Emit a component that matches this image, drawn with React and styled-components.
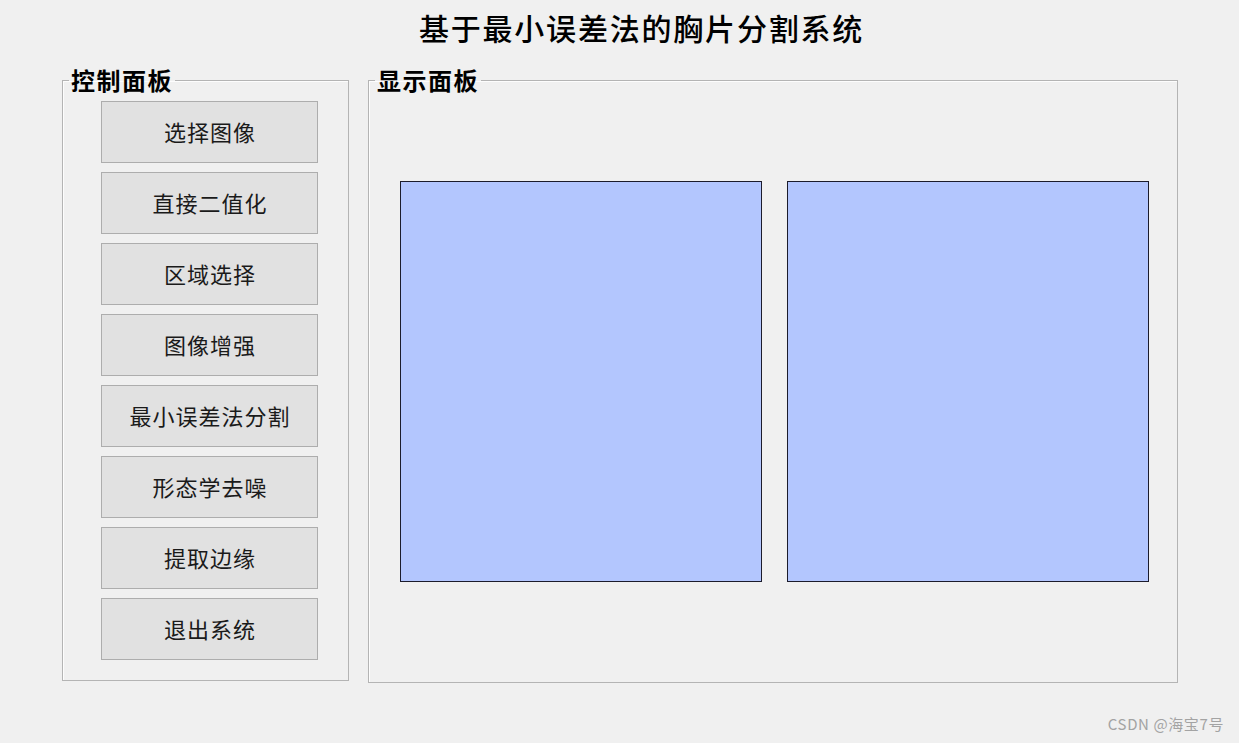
import React from 'react'
import styled, { createGlobalStyle } from 'styled-components'

const GlobalStyle = createGlobalStyle`
  html, body {
    margin: 0;
    padding: 0;
    background: #f0f0f0;
  }
  body {
    font-family: "Noto Sans CJK SC", "Noto Sans", sans-serif;
    color: #000;
  }
`;

const buttons = [
  '选择图像',
  '直接二值化',
  '区域选择',
  '图像增强',
  '最小误差法分割',
  '形态学去噪',
  '提取边缘',
  '退出系统',
];

function App() {
  return (
    <Page>
      <GlobalStyle />
      <Title>基于最小误差法的胸片分割系统</Title>
      <Main>
        <ControlPanel>
          <Legend>控制面板</Legend>
          <ButtonList>
            {buttons.map((label) => (
              <PushButton key={label}>{label}</PushButton>
            ))}
          </ButtonList>
        </ControlPanel>
        <DisplayPanel>
          <Legend>显示面板</Legend>
          <Axes>
            <ImageBox />
            <ImageBox />
          </Axes>
        </DisplayPanel>
      </Main>
      <Watermark>CSDN @海宝7号</Watermark>
    </Page>
  )
}

export default App

const Page = styled.div`
  width: 1239px;
  height: 743px;
  display: flex;
  flex-direction: column;
  overflow: hidden;
`;

const Title = styled.h1`
  margin: 0;
  padding: 7px 0 0 44px;
  height: 45px;
  text-align: center;
  font-size: 30px;
  line-height: 40px;
  font-weight: 500;
  letter-spacing: 1.8px;
`;

const Main = styled.div`
  display: flex;
  align-items: flex-start;
  gap: 19px;
  padding-left: 62px;
  margin-top: 16px;
`;

const Panel = styled.fieldset`
  box-sizing: border-box;
  margin: 0;
  border: 1px solid #b4b4b4;
  box-shadow: inset 1px 1px 0 #fdfdfd;
  padding: 0;
`;

const ControlPanel = styled(Panel)`
  width: 287px;
  height: 613px;
`;

const DisplayPanel = styled(Panel)`
  width: 810px;
  height: 615px;
`;

const Legend = styled.legend`
  margin-left: 6px;
  padding: 0 2px;
  font-size: 24px;
  line-height: 24px;
  font-weight: 700;
  letter-spacing: 1.5px;
`;

const ButtonList = styled.div`
  display: flex;
  flex-direction: column;
  gap: 9px;
  padding: 9px 0 0 38px;
`;

const PushButton = styled.button`
  box-sizing: border-box;
  width: 217px;
  height: 62px;
  background: #e1e1e1;
  border: 1px solid #adadad;
  border-radius: 0;
  font-family: "Noto Sans CJK SC", "Noto Sans", sans-serif;
  font-size: 22px;
  letter-spacing: 1px;
  color: #1a1a1a;
  padding: 0 0 2px 1px;
  cursor: pointer;
`;

const Axes = styled.div`
  display: flex;
  gap: 25px;
  padding: 89px 0 0 31px;
`;

const ImageBox = styled.div`
  box-sizing: border-box;
  width: 362px;
  height: 401px;
  background: #b3c6fe;
  border: 1px solid #1c1c2c;
`;

const Watermark = styled.div`
  margin-top: auto;
  padding: 0 15px 9px 0;
  text-align: right;
  font-family: "Noto Sans CJK SC", sans-serif;
  font-size: 15px;
  letter-spacing: 0.6px;
  color: #a3a3a3;
`;
